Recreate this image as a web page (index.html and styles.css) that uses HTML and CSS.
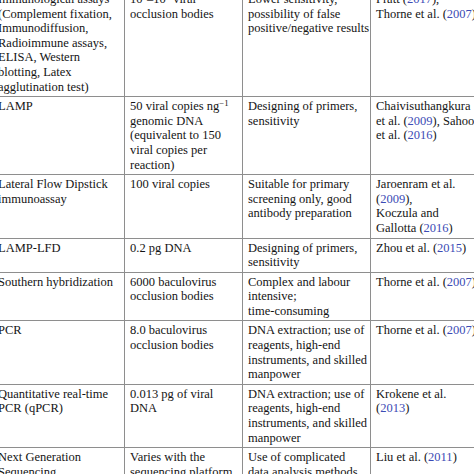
FILE: index.html
```html
<!DOCTYPE html>
<html>
<head>
<meta charset="utf-8">
<link rel="stylesheet" href="styles.css">
</head>
<body>
<table class="methods">
  <colgroup>
    <col class="c1"><col class="c2"><col class="c3"><col class="c4">
  </colgroup>
  <tr>
    <td>Immunological assays<br>(Complement fixation,<br>Immunodiffusion,<br>Radioimmune assays,<br>ELISA, Western<br>blotting, Latex<br>agglutination test)</td>
    <td>10<sup>4</sup>–10<sup>5</sup> viral<br>occlusion bodies</td>
    <td>Lower sensitivity,<br>possibility of false<br>positive/negative results</td>
    <td>Pratt (<span class="yr">2017</span>),<br>Thorne et al. (<span class="yr">2007</span>)</td>
  </tr>
  <tr>
    <td>LAMP</td>
    <td>50 viral copies ng<sup>−1</sup><br>genomic DNA<br>(equivalent to 150<br>viral copies per<br>reaction)</td>
    <td>Designing of primers,<br>sensitivity</td>
    <td>Chaivisuthangkura<br>et al. (<span class="yr">2009</span>), Sahoo<br>et al. (<span class="yr">2016</span>)</td>
  </tr>
  <tr>
    <td>Lateral Flow Dipstick<br>immunoassay</td>
    <td>100 viral copies</td>
    <td>Suitable for primary<br>screening only, good<br>antibody preparation</td>
    <td>Jaroenram et al.<br>(<span class="yr">2009</span>),<br>Koczula and<br>Gallotta (<span class="yr">2016</span>)</td>
  </tr>
  <tr>
    <td>LAMP-LFD</td>
    <td>0.2 pg DNA</td>
    <td>Designing of primers,<br>sensitivity</td>
    <td>Zhou et al. (<span class="yr">2015</span>)</td>
  </tr>
  <tr>
    <td>Southern hybridization</td>
    <td>6000 baculovirus<br>occlusion bodies</td>
    <td>Complex and labour<br>intensive;<br>time-consuming</td>
    <td>Thorne et al. (<span class="yr">2007</span>)</td>
  </tr>
  <tr>
    <td>PCR</td>
    <td>8.0 baculovirus<br>occlusion bodies</td>
    <td>DNA extraction; use of<br>reagents, high-end<br>instruments, and skilled<br>manpower</td>
    <td>Thorne et al. (<span class="yr">2007</span>)</td>
  </tr>
  <tr>
    <td>Quantitative real-time<br>PCR (qPCR)</td>
    <td>0.013 pg of viral<br>DNA</td>
    <td>DNA extraction; use of<br>reagents, high-end<br>instruments, and skilled<br>manpower</td>
    <td>Krokene et al.<br>(<span class="yr">2013</span>)</td>
  </tr>
  <tr>
    <td>Next Generation<br>Sequencing</td>
    <td>Varies with the<br>sequencing platform</td>
    <td>Use of complicated<br>data analysis methods</td>
    <td>Liu et al. (<span class="yr">2011</span>)</td>
  </tr>
</table>
</body>
</html>
```

FILE: styles.css
```css
html, body {
  margin: 0;
  padding: 0;
  background: #ffffff;
  overflow: hidden;
}

.methods {
  table-layout: fixed;
  border-collapse: collapse;
  width: 498px;
  margin-top: -11px;
  margin-left: -8px;
  font-family: "Liberation Serif", "Times New Roman", serif;
  font-size: 12.5px;
  line-height: 14.6px;
  color: #141414;
}

.c1 { width: 132px; }
.c2 { width: 118px; }
.c3 { width: 128px; }
.c4 { width: 120px; }

.methods td {
  border: 1px solid #8e8e8e;
  padding: 2px 5px 2px 5px;
  vertical-align: top;
  white-space: nowrap;
  overflow: hidden;
}

.methods sup {
  font-size: 0.7em;
  line-height: 0;
  vertical-align: 0.5em;
}

.yr {
  color: #3b4bb5;
}
```
